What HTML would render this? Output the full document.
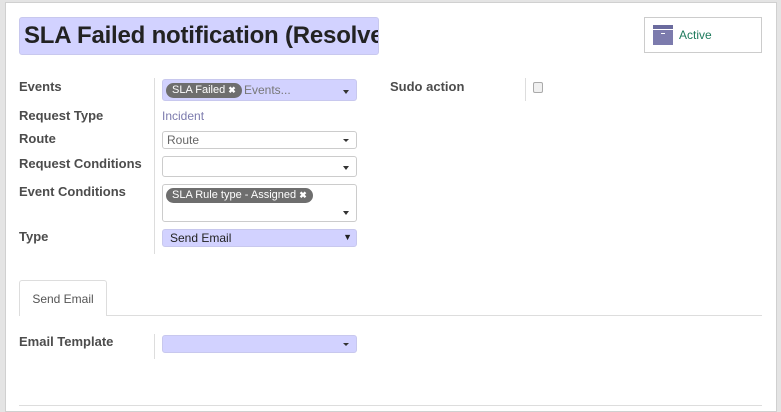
<!DOCTYPE html>
<html><head><style>
*{margin:0;padding:0;box-sizing:border-box}
body{width:781px;height:406px;overflow:hidden;background:#e4e4e4;font-family:"Liberation Sans",sans-serif;position:relative}
.sheet{position:absolute;left:5px;top:2px;width:772px;height:410px;background:#fff;border:1px solid #d0d0d0}
.a{position:absolute}
.lbl{position:absolute;left:19px;font-size:13px;font-weight:bold;color:#4c4c4c}
.fld{position:absolute;left:162px;width:195px;border:1px solid #ccc;border-radius:3px;background:#fff}
.req{background:#d2d2ff;border-color:#c8c8ee}
.caret{position:absolute;right:7px;width:0;height:0;border-left:3.5px solid transparent;border-right:3.5px solid transparent;border-top:4px solid #333}
.tag{position:absolute;background:#6e6e6e;color:#fff;font-size:11px;border-radius:9px;height:15px;line-height:15px;padding:0 6px;white-space:nowrap}
.tag b{font-size:9px}
</style></head><body>
<div class="sheet"></div>
<div class="a" style="left:19px;top:17px;width:360px;height:38px;background:#d2d2ff;border:1px solid #c8c8ee;border-radius:3px;overflow:hidden;font-size:24px;font-weight:bold;color:#222;line-height:36px;padding-left:4px;white-space:nowrap;letter-spacing:-0.2px">SLA Failed notification (Resolved)</div>
<div class="a" style="left:644px;top:17px;width:118px;height:36px;border:1px solid #ccc">
 <div class="a" style="left:8px;top:7px;width:20px;height:4px;background:#6b6b9e"></div>
 <div class="a" style="left:8px;top:12px;width:20px;height:15px;background:#7c7bad"></div>
 <div class="a" style="left:16px;top:15px;width:4px;height:1px;background:#fff"></div>
 <div class="a" style="left:34px;top:10px;font-size:12px;color:#1e7a5c">Active</div>
</div>
<div class="a" style="left:154px;top:78px;width:1px;height:176px;background:#ddd"></div>
<div class="lbl" style="top:79px">Events</div>
<div class="lbl" style="top:108px">Request Type</div>
<div class="lbl" style="top:131px">Route</div>
<div class="lbl" style="top:156px">Request Conditions</div>
<div class="lbl" style="top:184px">Event Conditions</div>
<div class="lbl" style="top:229px">Type</div>
<div class="fld req" style="top:79px;height:22px"><div class="tag" style="left:3px;top:3px">SLA Failed <b>✖</b></div><span class="a" style="left:81px;top:3px;font-size:12px;color:#777">Events...</span><div class="caret" style="top:10px"></div></div>
<div class="a" style="left:162px;top:109px;font-size:12px;color:#7c7bad">Incident</div>
<div class="fld" style="top:131px;height:18px"><span class="a" style="left:4px;top:1px;font-size:12px;color:#666">Route</span><div class="caret" style="top:7px;border-top-width:3px"></div></div>
<div class="fld" style="top:156px;height:21px"><div class="caret" style="top:9px"></div></div>
<div class="fld" style="top:184px;height:38px"><div class="tag" style="left:3px;top:3px">SLA Rule type - Assigned <b>✖</b></div><div class="caret" style="top:26px"></div></div>
<div class="fld req" style="top:229px;height:18px"><span class="a" style="left:7px;top:1px;font-size:12px;color:#222">Send Email</span><span class="a" style="right:4px;top:2px;font-size:9px;color:#222">▼</span></div>
<div class="lbl" style="left:390px;top:79px">Sudo action</div>
<div class="a" style="left:525px;top:78px;width:1px;height:23px;background:#ddd"></div>
<div class="a" style="left:533px;top:82px;width:10px;height:11px;border:1px solid #aaa;border-radius:2px;background:#f0f0f0"></div>
<div class="a" style="left:19px;top:315px;width:743px;height:1px;background:#ddd"></div>
<div class="a" style="left:19px;top:280px;width:88px;height:36px;border:1px solid #ddd;border-bottom:none;border-radius:3px 3px 0 0;background:#fff;font-size:12px;color:#555;text-align:center;line-height:36px">Send Email</div>
<div class="lbl" style="top:334px">Email Template</div>
<div class="a" style="left:154px;top:334px;width:1px;height:25px;background:#ddd"></div>
<div class="fld req" style="top:335px;height:18px"><div class="caret" style="top:7px;border-top-width:3px"></div></div>
<div class="a" style="left:19px;top:405px;width:743px;height:1px;background:#ddd"></div>
</body></html>
